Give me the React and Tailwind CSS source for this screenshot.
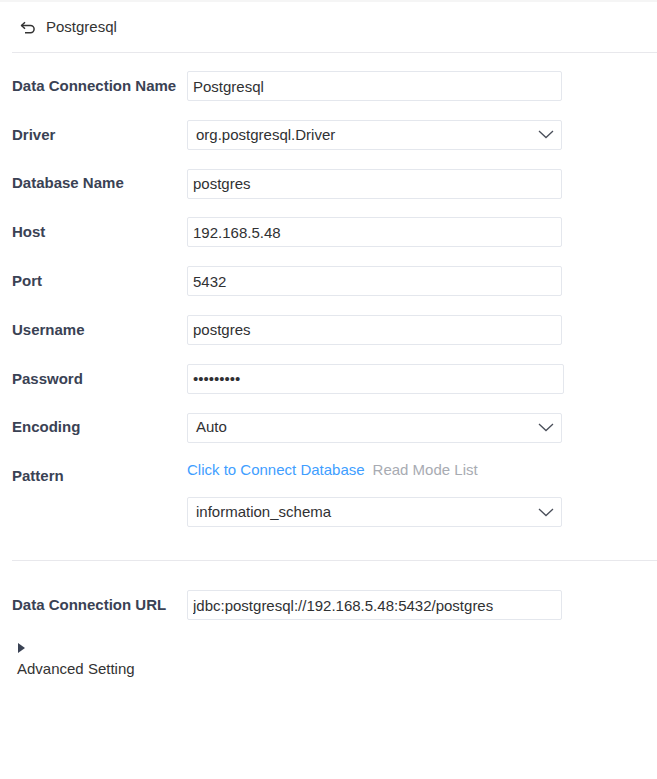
const fields = [
  { label: 'Data Connection Name', value: 'Postgresql' },
  { label: 'Driver', value: 'org.postgresql.Driver', select: true },
  { label: 'Database Name', value: 'postgres' },
  { label: 'Host', value: '192.168.5.48' },
  { label: 'Port', value: '5432' },
  { label: 'Username', value: 'postgres' },
  { label: 'Password', value: '123456789', password: true },
  { label: 'Encoding', value: 'Auto', select: true },
];

function BackIcon() {
  return (
    <svg width="16" height="13" viewBox="0 0 16 13" fill="none">
      <path d="M5 1.2 L1.5 4.5 L5 7.8" stroke="#333" strokeWidth="1.5" strokeLinejoin="round" />
      <path d="M1.5 4.5 H10.5 a3.6 3.6 0 0 1 0 7.2 H5" stroke="#333" strokeWidth="1.5" />
    </svg>
  );
}

function Chevron() {
  return (
    <svg width="16" height="9" viewBox="0 0 16 9" fill="none">
      <path d="M1 1 L8 7.5 L15 1" stroke="#4a4f5a" strokeWidth="1.3" />
    </svg>
  );
}

function SelectBox({ value }) {
  return (
    <div className="w-[375px] h-[30px] border border-[#e4e7ed] rounded-[2px] flex items-center justify-between pl-[8px] pr-[7px] bg-white">
      <span className="text-[#303133]">{value}</span>
      <Chevron />
    </div>
  );
}

function TextBox({ value, password, wide }) {
  return (
    <input
      readOnly
      type={password ? 'password' : 'text'}
      value={value}
      className={`${wide ? 'w-[377px]' : 'w-[375px]'} h-[30px] border border-[#e4e7ed] rounded-[2px] px-[5px] text-[#303133] outline-none bg-white`}
    />
  );
}

export default function App() {
  return (
    <div
      className="min-h-screen bg-white text-[15px] text-[#303133]"
      style={{ fontFamily: '"Liberation Sans", Arial, sans-serif' }}
    >
      <div className="h-[2px] bg-[#f5f5f5]" />

      {/* header */}
      <div className="ml-[12px] border-b border-[#e8e8ec] h-[51px] flex items-center pl-[8px] gap-[10px]">
        <BackIcon />
        <span className="text-[#333]">Postgresql</span>
      </div>

      <div className="pl-[12px] pt-[18px]">
        {fields.map((f) => (
          <div key={f.label} className="flex items-center mb-[18.8px]">
            <div className="w-[175px] font-bold text-[#3a4254]">{f.label}</div>
            {f.select ? (
              <SelectBox value={f.value} />
            ) : (
              <TextBox value={f.value} password={f.password} wide={f.password} />
            )}
          </div>
        ))}

        {/* pattern */}
        <div className="flex items-start">
          <div className="w-[175px] h-[26px] flex items-end font-bold text-[#3a4254]">Pattern</div>
          <div className="flex flex-col">
            <div className="h-[18px] flex items-center gap-[8px]">
              <span className="text-[#409eff]">Click to Connect Database</span>
              <span className="text-[#a8abb2]">Read Mode List</span>
            </div>
            <div className="mt-[18px]">
              <SelectBox value="information_schema" />
            </div>
          </div>
        </div>
      </div>

      <div className="ml-[12px] mt-[33px] border-t border-[#e8e8ec]" />

      <div className="pl-[12px] pt-[29px]">
        <div className="flex items-center">
          <div className="w-[175px] font-bold text-[#3a4254]">Data Connection URL</div>
          <TextBox value="jdbc:postgresql://192.168.5.48:5432/postgres" />
        </div>

        <div className="pl-[5px] mt-[23px]">
          <svg width="8" height="10" viewBox="0 0 8 10" className="ml-[1px]">
            <path d="M0 0 L7 5 L0 10 Z" fill="#3a4254" />
          </svg>
          <div className="mt-[5px] text-[#333]">Advanced Setting</div>
        </div>
      </div>
    </div>
  );
}
